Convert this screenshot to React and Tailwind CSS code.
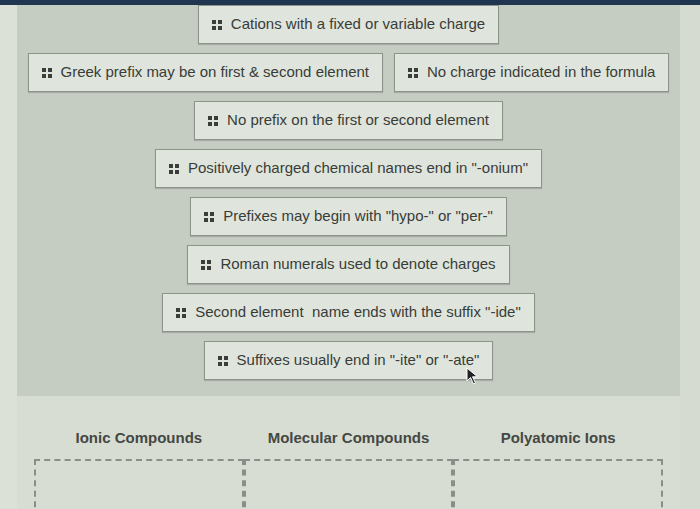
const items = [
  ["Cations with a fixed or variable charge"],
  ["Greek prefix may be on first & second element", "No charge indicated in the formula"],
  ["No prefix on the first or second element"],
  ['Positively charged chemical names end in "-onium"'],
  ['Prefixes may begin with "hypo-" or "per-"'],
  ["Roman numerals used to denote charges"],
  ['Second element  name ends with the suffix "-ide"'],
  ['Suffixes usually end in "-ite" or "-ate"'],
]

const categories = ["Ionic Compounds", "Molecular Compounds", "Polyatomic Ions"]

function Handle() {
  return (
    <span className="grid grid-cols-2 gap-[2px] shrink-0">
      <span className="w-[4px] h-[4px] bg-[#3a3d3a]" />
      <span className="w-[4px] h-[4px] bg-[#3a3d3a]" />
      <span className="w-[4px] h-[4px] bg-[#3a3d3a]" />
      <span className="w-[4px] h-[4px] bg-[#3a3d3a]" />
    </span>
  )
}

function Chip({ label, cursor }) {
  return (
    <div className="relative flex items-center gap-[9px] h-[39px] px-[13px] bg-[#dfe5dc] border border-[#8d928b] shadow-[0_1px_1px_rgba(0,0,0,0.15)] text-[15px] text-[#393c39] whitespace-pre">
      <Handle />
      <span>{label}</span>
      {cursor && (
        <svg className="absolute right-[12px] bottom-[-6px]" width="14" height="18" viewBox="0 0 14 18">
          <path d="M1 1 L1 14 L4.5 10.5 L7.5 17 L9.5 16 L6.5 9.8 L11.5 9.8 Z" fill="#222" stroke="#fff" strokeWidth="1" />
        </svg>
      )}
    </div>
  )
}

export default function App() {
  return (
    <div className="w-[700px] h-[509px] overflow-hidden bg-[#d8ddd3] font-['Liberation_Sans',Arial,sans-serif] flex flex-col">
      <div className="h-[5px] bg-[#1f3550] shrink-0" />
      <div className="flex flex-1">
        <div className="w-[17px] bg-[#dce1d8] shrink-0" />
        <div className="flex-1 flex flex-col">
          <div className="h-[391px] bg-[#c5ccc2] flex flex-col items-center gap-[9px]">
            {items.map((row, i) => (
              <div key={i} className="flex justify-center gap-[11px]">
                {row.map((label) => (
                  <Chip key={label} label={label} cursor={label.startsWith("Suffixes")} />
                ))}
              </div>
            ))}
          </div>
          <div className="flex-1 px-[17px] pt-[31px]">
            <div className="grid grid-cols-3">
              {categories.map((c) => (
                <div key={c} className="flex flex-col">
                  <div className="text-center text-[15px] font-bold text-[#444844] h-[24px]">{c}</div>
                  <div className="mt-[8px] h-[80px] border-t-2 border-l-2 border-r-2 border-dashed border-[#8a8e88]" />
                </div>
              ))}
            </div>
          </div>
        </div>
        <div className="w-[20px] bg-[#d6dbd1] shrink-0" />
      </div>
    </div>
  )
}
